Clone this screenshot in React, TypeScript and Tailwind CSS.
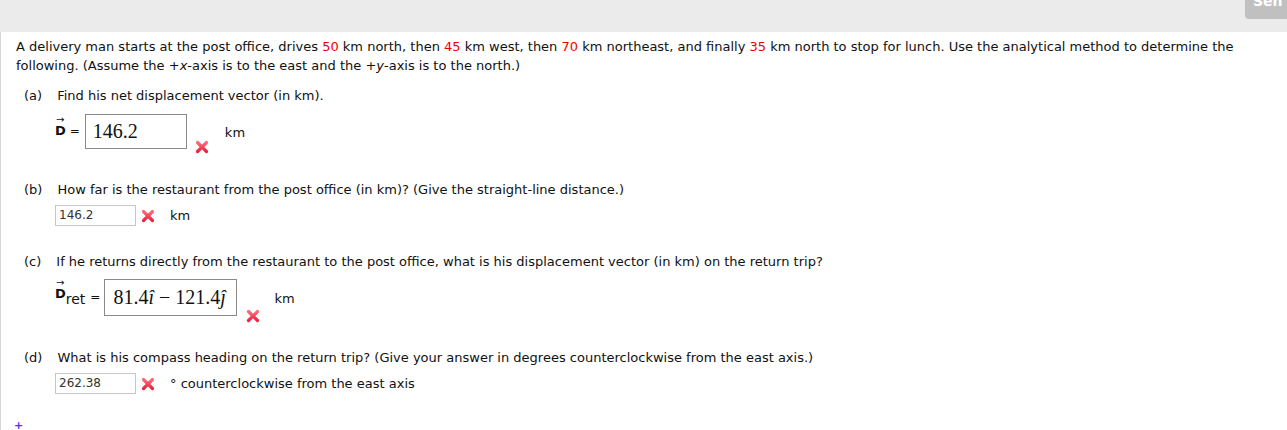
import React from 'react'

function RedX({ className = '' }: { className?: string }) {
  return (
    <svg width="14" height="14" viewBox="0 0 14 14" className={className}>
      <defs>
        <linearGradient id="rx" x1="0" y1="0" x2="0" y2="1">
          <stop offset="0" stopColor="#ff6b7c" />
          <stop offset="1" stopColor="#e8253c" />
        </linearGradient>
      </defs>
      <path d="M2.5 2.5 L11.5 11.5 M11.5 2.5 L2.5 11.5" stroke="url(#rx)" strokeWidth="3.2" strokeLinecap="round" />
    </svg>
  )
}

function VecD() {
  return (
    <span className="relative inline-block font-bold">
      <span className="absolute left-[1px] top-[-9px] text-[10px] font-normal">&rarr;</span>
      D
    </span>
  )
}

function SmallInput({ value }: { value: string }) {
  return (
    <div className="w-[81px] h-[21px] border border-[#c6c6c6] px-[3px] text-[12px] leading-[19px] text-[#333]">
      {value}
    </div>
  )
}

const red = 'text-[#ee0000]'

export default function App() {
  return (
    <div className="w-[1287px] h-[430px] bg-white overflow-hidden text-[13px] text-[#111]" style={{ fontFamily: '"DejaVu Sans", Verdana, sans-serif' }}>
      <div className="relative h-[32px] bg-[#ebebeb]">
        <div className="absolute right-0 top-0 w-[42px] h-[19px] rounded-bl-[4px] bg-[#c0c0c0] overflow-hidden">
          <span className="absolute left-[8px] top-[-9px] text-[14px] font-bold text-white">Sen</span>
        </div>
      </div>
      <div className="relative h-[398px] border-l border-[#d6d6d6] pl-[15px] pt-[5px]">
        <p className="leading-[19px] pr-[20px]">
          A delivery man starts at the post office, drives <span className={red}>50</span> km north, then <span className={red}>45</span> km west, then <span className={red}>70</span> km northeast, and finally <span className={red}>35</span> km north to stop for lunch. Use the analytical method to determine the following. (Assume the +<i>x</i>-axis is to the east and the +<i>y</i>-axis is to the north.)
        </p>

        <div className="mt-[11px] ml-[8px] flex gap-[15px]">
          <span>(a)</span>
          <span>Find his net displacement vector (in km).</span>
        </div>
        <div className="mt-[8px] ml-[39px] flex items-start">
          <div className="flex items-center h-[34px] gap-[4px]">
            <VecD />
            <span className="text-[12px]">=</span>
          </div>
          <div className="ml-[5px] w-[102px] h-[35px] border border-[#8a8a8a] pl-[7px] text-[20px] leading-[32px]" style={{ fontFamily: '"Liberation Serif", "Times New Roman", serif' }}>
            146.2
          </div>
          <RedX className="ml-[8px] mt-[26px]" />
          <span className="ml-[16px] mt-[9px]">km</span>
        </div>

        <div className="mt-[26px] ml-[8px] flex gap-[15px]">
          <span>(b)</span>
          <span>How far is the restaurant from the post office (in km)? (Give the straight-line distance.)</span>
        </div>
        <div className="mt-[6px] ml-[39px] flex items-center">
          <SmallInput value="146.2" />
          <RedX className="ml-[5px]" />
          <span className="ml-[15px]">km</span>
        </div>

        <div className="mt-[26px] ml-[8px] flex gap-[15px]">
          <span>(c)</span>
          <span>If he returns directly from the restaurant to the post office, what is his displacement vector (in km) on the return trip?</span>
        </div>
        <div className="mt-[7px] ml-[39px] flex items-start">
          <div className="flex items-center h-[36px] gap-[5px]">
            <span className="flex items-start">
              <VecD />
              <span className="text-[14px] mt-[5px]">ret</span>
            </span>
            <span className="text-[12px]">=</span>
          </div>
          <div className="ml-[4px] w-[133px] h-[37px] border border-[#8a8a8a] pl-[8px] text-[20px] leading-[34px] whitespace-nowrap" style={{ fontFamily: '"Liberation Serif", "Times New Roman", serif' }}>
            81.4<i>î</i> − 121.4<i>ĵ</i>
          </div>
          <RedX className="ml-[9px] mt-[30px]" />
          <span className="ml-[14px] mt-[10px]">km</span>
        </div>

        <div className="mt-[25px] ml-[8px] flex gap-[15px]">
          <span>(d)</span>
          <span>What is his compass heading on the return trip? (Give your answer in degrees counterclockwise from the east axis.)</span>
        </div>
        <div className="mt-[6px] ml-[39px] flex items-center">
          <SmallInput value="262.38" />
          <RedX className="ml-[5px]" />
          <span className="ml-[15px]">° counterclockwise from the east axis</span>
        </div>

        <span className="absolute left-[13px] bottom-[-4px] text-[11px] font-bold text-[#5b2bff]">+</span>
      </div>
    </div>
  )
}
